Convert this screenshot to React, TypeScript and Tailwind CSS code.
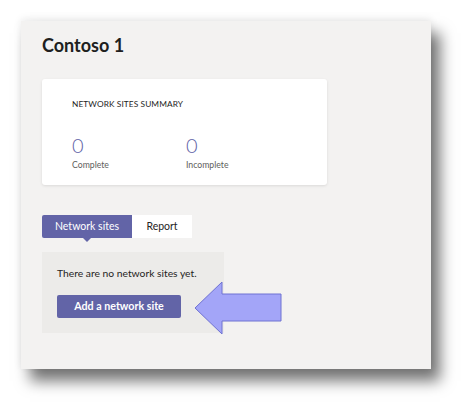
export default function App() {
  return (
    <div
      className="relative h-[412px] w-[474px] overflow-hidden bg-white pl-[21px] pt-[21px]"
      style={{ fontFamily: 'Lato, "Open Sans", Arial, sans-serif' }}
    >
      <div className="h-[348px] w-[410px] bg-[#f3f2f1] pl-[21px] pt-[12px] shadow-[9px_12px_14px_rgba(0,0,0,0.55),0_-2px_8px_rgba(0,0,0,0.08)]">
        <h1 className="text-[18px] font-bold leading-[24px] text-[#201f1e]">Contoso 1</h1>

        <div className="mt-[22px] h-[106px] w-[285px] rounded-[3px] bg-white pl-[30px] pt-[19px] shadow-[0_1px_3px_rgba(0,0,0,0.1)]">
          <p className="text-[8.3px] uppercase leading-[12px] tracking-[0.1px] text-[#252423]">Network sites summary</p>
          <div className="mt-[24px] flex">
            <div className="w-[114px]">
              <p className="text-[20px] font-light leading-[22px] text-[#6264a7]">0</p>
              <p className="mt-[3px] text-[8.7px] leading-[12px] text-[#605e5c]">Complete</p>
            </div>
            <div>
              <p className="text-[20px] font-light leading-[22px] text-[#6264a7]">0</p>
              <p className="mt-[3px] text-[8.7px] leading-[12px] text-[#605e5c]">Incomplete</p>
            </div>
          </div>
        </div>

        <div className="mt-[30px] flex">
          <div className="relative flex h-[23px] w-[90px] items-center justify-center rounded-l-[2px] bg-[#6264a7] text-[10.5px] text-white">
            Network sites
            <span className="absolute left-[41px] top-[23px] h-0 w-0 border-x-[4px] border-t-[4px] border-x-transparent border-t-[#6264a7]" />
          </div>
          <div className="flex h-[23px] w-[60px] items-center justify-center bg-white text-[10.5px] text-[#252423]">
            Report
          </div>
        </div>

        <div className="mt-[14px] h-[81px] w-[182px] bg-[#ecebe9] pl-[15px] pt-[13px]">
          <p className="text-[10.3px] leading-[16px] text-[#252423]">There are no network sites yet.</p>
          <button className="mt-[14px] flex h-[23px] w-[124px] items-center justify-center rounded-[2px] bg-[#6264a7] text-[10.7px] font-bold text-white">
            Add a network site
          </button>
        </div>
      </div>

      <svg className="absolute left-[194px] top-[281px]" width="90" height="54" viewBox="0 0 90 54">
        <polygon
          points="1,27 28,1 28,13 87,13 87,40 28,40 28,53"
          fill="#a3a5f8"
          stroke="#6f72d2"
          strokeWidth="1"
        />
      </svg>
    </div>
  )
}
